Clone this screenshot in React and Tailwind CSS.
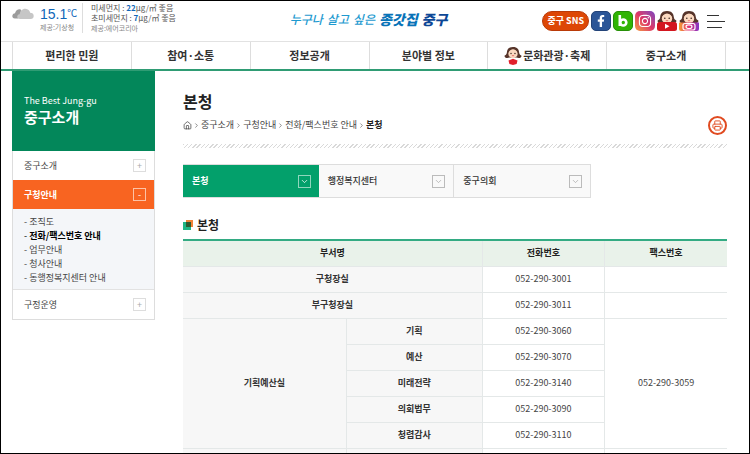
import React from 'react'
import { FaFacebookF, FaInstagram } from 'react-icons/fa'
import { ChevronDown, ChevronRight, House, Printer } from 'lucide-react'
import clsx from 'clsx'

const subMenu = ['조직도', '전화/팩스번호 안내', '업무안내', '청사안내', '동행정복지센터 안내']
const crumbs = ['중구소개', '구청안내', '전화/팩스번호 안내']
const tabs = ['본청', '행정복지센터', '중구의회']
const offices = [
  { name: '구청장실', phone: '052-290-3001' },
  { name: '부구청장실', phone: '052-290-3011' }
]
const planning = [
  { name: '기획', phone: '052-290-3060' },
  { name: '예산', phone: '052-290-3070' },
  { name: '미래전략', phone: '052-290-3140' },
  { name: '의회법무', phone: '052-290-3090' },
  { name: '청렴감사', phone: '052-290-3110' }
]

const Girl = ({ children, className }) => (
  <svg viewBox="0 0 20 20" className={className} aria-hidden="true">
    <path d="M10 0C5 0 3.400 3 3.200 6 3 8.300 1.600 8.800.5 9.800.6 12.200 3.600 13 6 11.800h8c2.400 1.200 5.400.4 5.500-2-1.100-1-2.500-1.500-2.700-3.800C16.600 3 15 0 10 0z" fill="#57352b" />
    <ellipse cx="10" cy="7.400" rx="5.200" ry="5" fill="#fbd9c0" />
    <path d="M4.400 6.800C5 4 8 3 10 1.800 12 3 15 4 15.600 6.800 15.800 2.600 13.500.8 10 .8S4.200 2.600 4.400 6.800z" fill="#57352b" />
    <circle cx="7.800" cy="7.200" r=".8" fill="#3b2620" />
    <circle cx="12.200" cy="7.200" r=".8" fill="#3b2620" />
    <path d="M8.500 9.500q1.500 1.400 3 0z" fill="#d9262e" />
    {children}
  </svg>
)

const Cloud = () => (
  <svg viewBox="0 0 22 12" className="h-3 w-[22px]" aria-hidden="true">
    <path d="M3 10.500C.8 10.500 0 9 .4 7.500.8 6 2 5.500 3 5.300 3.500 2.500 6 .8 8.500 1.300L10 5 6 10.500z" fill="#9b9b9b" />
    <path d="M8 11c-2 0-3-1.400-2.700-2.800C5.600 6.800 6.700 6.200 7.700 6.200 8 3 10.500.6 13.500.8c2.600.2 4.200 1.800 4.700 4 2 0 3.500 1.200 3.500 3.200 0 1.800-1.200 3-3 3z" fill="#c6c6c6" />
  </svg>
)

const Header = () => (
  <header className="grid h-10 grid-cols-[1fr_auto_1fr] items-start pr-6 pl-[11px]">
    <div className="flex text-[8px] leading-[10px] text-[#555]">
      <div className="flex gap-[6px] pt-[7px]">
        <Cloud />
        <div className="flex w-[42px] flex-col gap-[2px]">
          <p className="flex items-start font-['Liberation_Sans'] text-[14px] leading-3 whitespace-nowrap text-[#0f66b8]">
            15.1<span className="font-['Noto_Sans_CJK_KR'] text-[10px] leading-[10px]">℃</span>
          </p>
          <p className="text-[7px] leading-[10px] whitespace-nowrap text-[#888]">제공:기상청</p>
        </div>
      </div>
      <div className="mt-[2px] border-l border-[#ddd] pl-2 whitespace-nowrap">
        <p>미세먼지 : <b className="text-[#0f66b8]">22</b>µg/㎥ 좋음</p>
        <p>초미세먼지 : <b className="text-[#0f66b8]">7</b>µg/㎥ 좋음</p>
        <p className="text-[7px] text-[#888]">제공:에어코리아</p>
      </div>
    </div>
    <a href="#" className="flex items-center gap-1 pt-[6px] text-[12px] leading-6 font-medium whitespace-nowrap text-[#1e9ad0] italic">
      <span>누구나</span>
      <span>살고</span>
      <span>싶은</span>
      <b className="text-[14px] font-black text-[#0873b8]">종갓집</b>
      <b className="text-[14px] font-black text-[#0d4796]">중구</b>
    </a>
    <div className="flex items-center justify-end gap-[2px] pt-[10px]">
      <a href="#" className="rounded-full border border-[#b93a08] bg-[#dd4705] px-1 text-[9px] leading-[18px] font-bold whitespace-nowrap text-white">중구 SNS</a>
      <a href="#" aria-label="페이스북" className="flex size-5 items-center justify-center rounded-[5px] border border-[#234378] bg-[#2c5697] text-white">
        <FaFacebookF size={12} />
      </a>
      <a href="#" aria-label="블로그" className="flex size-5 items-center justify-center rounded-[5px] border border-[#279008] bg-[#31b404] text-white">
        <svg viewBox="0 0 10 12" className="h-3 w-[10px]" aria-hidden="true">
          <path d="M1.800 0v11" stroke="currentColor" strokeWidth="2.600" />
          <circle cx="5.300" cy="7.500" r="3" fill="none" stroke="currentColor" strokeWidth="2.600" />
        </svg>
      </a>
      <a href="#" aria-label="인스타그램" className="flex size-5 items-center justify-center rounded-[5px] bg-linear-to-tr from-[#f59a35] via-[#dc3468] to-[#7b3cc0] text-white">
        <FaInstagram size={14} />
      </a>
      <a href="#" aria-label="유튜브">
        <Girl className="size-5">
          <rect x="0" y="11" width="20" height="9" rx="2.500" fill="#d3161f" />
          <path d="M8 12.800v5l4.500-2.500z" fill="#fff" />
        </Girl>
      </a>
      <a href="#" aria-label="캐릭터 인스타그램">
        <Girl className="size-5">
          <defs>
            <linearGradient id="insta" x1="0" x2="1">
              <stop offset="0" stopColor="#f7a22f" />
              <stop offset=".5" stopColor="#e02d76" />
              <stop offset="1" stopColor="#8438c8" />
            </linearGradient>
          </defs>
          <path d="M0 11.500h20V18q0 2-2 2H2q-2 0-2-2z" fill="url(#insta)" />
          <rect x="4" y="12.500" width="12" height="6.500" rx="2" fill="none" stroke="#fff" strokeWidth="1.200" />
          <ellipse cx="10" cy="15.700" rx="3" ry="1.800" fill="none" stroke="#fff" strokeWidth="1.200" />
        </Girl>
      </a>
      <button type="button" aria-label="전체메뉴" className="ml-[6px] flex w-[18px] flex-col gap-[5px]">
        <span className="h-px w-3 bg-[#333]"></span>
        <span className="h-px w-full bg-[#333]"></span>
        <span className="h-px w-[15px] bg-[#333]"></span>
      </button>
    </div>
  </header>
)

const Nav = () => (
  <nav className="border-t border-b-2 border-t-[#e2e2e2] border-b-[#2f9c74] pr-[23px] pl-[11px]">
    <ul className="grid grid-cols-6 border-l border-[#ddd] text-[11px] leading-[27px] font-bold text-[#333]">
      {['편리한 민원', '참여·소통', '정보공개', '분야별 정보', '문화관광·축제', '중구소개'].map((menu) => (
        <li key={menu} className="border-r border-[#ddd]">
          <a href="#" className="flex items-center justify-center gap-px whitespace-nowrap">
            {menu === '문화관광·축제' && (
              <Girl className="size-[18px]">
                <path d="M5 15l5-2 5 2-1 4-4 1-4-1z" fill="#e2202c" />
              </Girl>
            )}
            {menu}
          </a>
        </li>
      ))}
    </ul>
  </nav>
)

const SideItem = ({ label, active }) => (
  <a
    href="#"
    className={clsx(
      'flex h-[29px] items-center justify-between pr-2 pl-[11px]',
      active ? 'bg-[#f86421] font-bold text-white' : 'text-[#444]'
    )}
  >
    {label}
    <span
      className={clsx(
        'flex size-[13px] items-center justify-center border font-normal',
        active ? 'border-[#fdc2a5]' : 'border-[#ddd] text-[#aaa]'
      )}
    >
      {active ? '-' : '+'}
    </span>
  </a>
)

const Sidebar = () => (
  <aside className="w-[143px] shrink-0 text-[9px]">
    <div className="flex h-20 flex-col justify-center bg-[#03875a] pl-3 text-white">
      <p className="leading-3">The Best Jung-gu</p>
      <h2 className="text-[15px] leading-5 font-bold">중구소개</h2>
    </div>
    <div className="border border-t-0 border-[#ddd]">
      <SideItem label="중구소개" />
      <SideItem label="구청안내" active />
      <ul className="border-b border-[#e2e2e2] bg-[#f4f6f9] pt-[6px] pb-1 pl-[11px] leading-[14px] text-[#444]">
        {subMenu.map((item, i) => (
          <li key={item}>
            <a href="#" className={clsx('flex gap-[2px]', i === 1 && 'font-bold text-black')}>
              <span className="font-normal">-</span>
              {item}
            </a>
          </li>
        ))}
      </ul>
      <SideItem label="구정운영" />
    </div>
  </aside>
)

const PhoneTable = () => (
  <table className="mt-1 w-full table-fixed border-collapse border-t-2 border-[#33ab83] text-center text-[9px] leading-3 text-[#444] [&_td]:border [&_td]:border-[#e4e8e8] [&_th]:border [&_th]:border-[#e4e8e8] [&_tr>*:first-child]:border-l-0 [&_tr>*:last-child]:border-r-0">
    <colgroup>
      <col className="w-[30%]" />
      <col className="w-[25%]" />
      <col />
      <col />
    </colgroup>
    <thead className="bg-[#e9f2ea] text-[#222]">
      <tr className="h-[26px]">
        <th colSpan={2}>부서명</th>
        <th>전화번호</th>
        <th>팩스번호</th>
      </tr>
    </thead>
    <tbody className="[&_th]:bg-[#f7f7f7] [&_th]:text-[#333]">
      {offices.map((office) => (
        <tr key={office.name} className="h-[26px]">
          <th colSpan={2}>{office.name}</th>
          <td>{office.phone}</td>
          <td></td>
        </tr>
      ))}
      {planning.map((team, i) => (
        <tr key={team.name} className="h-[26px]">
          {i === 0 && <th rowSpan={5}>기획예산실</th>}
          <th className="border-l!">{team.name}</th>
          <td className="border-r!">{team.phone}</td>
          {i === 0 && <td rowSpan={5}>052-290-3059</td>}
        </tr>
      ))}
      <tr className="h-[26px]">
        <th></th>
        <th></th>
        <td></td>
        <td></td>
      </tr>
    </tbody>
  </table>
)

export default function App() {
  return (
    <div className="h-screen overflow-hidden border border-black bg-white font-['Noto_Sans_CJK_KR',sans-serif]">
      <Header />
      <Nav />
      <div className="flex gap-7 pr-[22px] pl-[11px]">
        <Sidebar />
        <main className="min-w-0 flex-1 pt-[18px]">
          <h1 className="text-[16px] leading-6 font-bold text-[#222]">본청</h1>
          <div className="flex h-6 items-center justify-between">
            <div className="flex items-center gap-px text-[9px] leading-3 text-[#444]">
              <House size={9} strokeWidth={2} />
              {crumbs.map((crumb) => (
                <React.Fragment key={crumb}>
                  <ChevronRight size={7} />
                  <a href="#">{crumb}</a>
                </React.Fragment>
              ))}
              <ChevronRight size={7} />
              <b className="text-[#222]">본청</b>
            </div>
            <button type="button" aria-label="인쇄" className="flex size-[19px] items-center justify-center rounded-full border-2 border-[#e04a20] text-[#e04a20]">
              <Printer size={11} />
            </button>
          </div>
          <div className="mt-[7px] h-1 bg-[repeating-linear-gradient(135deg,#d9d9d9_0_1px,#fff_1px_3px)]"></div>
          <div className="mt-4 grid w-3/4 grid-cols-3 border border-l-0 border-[#ddd] bg-[#f9f9f9]">
            {tabs.map((tab, i) => (
              <button
                key={tab}
                type="button"
                className={clsx(
                  'flex h-8 items-center justify-between pr-2 pl-[9px] text-[9px]',
                  i === 0 ? 'bg-[#03a06b] font-bold text-white' : 'font-medium text-[#333]',
                  i === 1 && 'border-r border-[#ddd]'
                )}
              >
                {tab}
                <span className={clsx('flex size-[13px] items-center justify-center border', i === 0 ? 'border-[#8fd6bd]' : 'border-[#bbb] text-[#aaa]')}>
                  <ChevronDown size={9} />
                </span>
              </button>
            ))}
          </div>
          <h3 className="mt-[17px] flex items-center gap-1 text-[12px] leading-5 font-bold text-[#222]">
            <svg viewBox="0 0 10 10" className="size-[10px]" aria-hidden="true">
              <path d="M3 0h7v7H3z" fill="#f08437" />
              <path d="M0 2h8v8H0z" fill="#1fb583" />
              <path d="M3 2h5v5H3z" fill="#2d5c30" />
            </svg>
            본청
          </h3>
          <PhoneTable />
        </main>
      </div>
    </div>
  )
}
